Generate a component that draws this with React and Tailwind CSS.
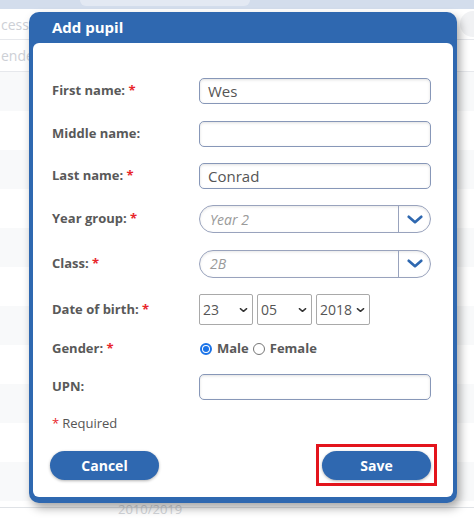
import React from "react";

const BLUE = "#2f68b0";

function Label({ text, required }) {
  return (
    <div className="w-[147px] shrink-0 text-[13px] font-bold text-[#595959]">
      {text}
      {required && <span className="text-[#e8262b]"> *</span>}
    </div>
  );
}

function Chevron({ className }) {
  return (
    <svg viewBox="0 0 20 12" className={className} fill="none">
      <path d="M3 3l7 6 7-6" stroke={BLUE} strokeWidth="3" strokeLinecap="round" strokeLinejoin="round" />
    </svg>
  );
}

function SmallChevron() {
  return (
    <svg viewBox="0 0 10 6" className="w-[9px] h-[6px] shrink-0" fill="none">
      <path d="M1.5 1.5l3.5 3 3.5-3" stroke="#333" strokeWidth="1.6" strokeLinecap="round" strokeLinejoin="round" />
    </svg>
  );
}

function TextBox({ value }) {
  return (
    <div className="w-[232px] h-[26px] flex items-center pl-[8px] rounded-[5px] border border-[#8797b8] bg-white shadow-[inset_0_1px_3px_rgba(0,0,0,0.12)] text-[15px] text-[#555]">
      {value}
    </div>
  );
}

function Picker({ value }) {
  return (
    <div className="w-[232px] h-[28px] flex rounded-full border border-[#99a3bd] bg-white shadow-[inset_0_1px_3px_rgba(0,0,0,0.1)] overflow-hidden">
      <div className="flex-1 flex items-center pl-[10px] text-[14px] italic text-[#9a9a9a]">{value}</div>
      <div className="w-[32px] border-l border-[#99a3bd] flex items-center justify-center">
        <Chevron className="w-[18px] h-[11px]" />
      </div>
    </div>
  );
}

function DateBox({ value, w }) {
  return (
    <div className={`${w} h-[31px] flex items-center justify-between pl-[3px] pr-[4px] border border-[#a9a9a9] rounded-[2px] bg-white text-[14px] text-[#555]`}>
      <span>{value}</span>
      <SmallChevron />
    </div>
  );
}

function Radio({ checked }) {
  return checked ? (
    <span className="inline-flex w-[12px] h-[12px] rounded-full border-2 border-[#1a73e8] items-center justify-center">
      <span className="block w-[6px] h-[6px] rounded-full bg-[#1a73e8]" />
    </span>
  ) : (
    <span className="inline-block w-[12px] h-[12px] rounded-full border border-[#767676] bg-white" />
  );
}

export default function App() {
  const stripes = [0, 1, 2, 3, 4, 5, 6, 7, 8, 9, 10];

  return (
    <div className="relative w-[474px] h-[518px] overflow-hidden bg-white font-['Open_Sans',sans-serif]">
      {/* page behind the modal */}
      <div className="h-[9px] bg-[#d3ddec] flex px-[80px]">
        <div className="w-[170px] h-[6px] rounded-b-full bg-[#e3e9f3]" />
      </div>
      <div className="h-[31px] flex items-center justify-between border-b border-[#e6e8ec] text-[14px] text-[#cdd0d6]">
        <span className="pl-[1px]">cess</span>
        <span className="w-[26px] h-[26px] rounded-full bg-[#f1f2f4] mr-[-12px]" />
      </div>
      <div className="h-[32px] flex items-center border-b border-[#e6e8ec] text-[14px] text-[#cdd0d6]">
        <span className="pl-[1px]">ende</span>
      </div>
      {stripes.map((i) => (
        <div key={i} className={`h-[39px] ${i % 2 === 0 ? "bg-[#f8f9fa]" : "bg-white"}`} />
      ))}
      <div className="absolute left-0 right-0 top-[507px] border-t border-[#dfe2e6]" />
      <div className="absolute left-[118px] top-[500px] text-[13px] text-[#d3d6da]">2010/2019</div>

      {/* modal */}
      <div className="absolute left-[29px] top-[12px] w-[428px] h-[491px] flex flex-col rounded-[10px] bg-[#2f68b0] shadow-[3px_5px_10px_rgba(0,0,0,0.35)]">
        <div className="h-[31px] shrink-0 flex items-center pl-[23px] text-[15px] font-bold text-white">
          Add pupil
        </div>
        <div className="flex-1 mx-[4px] mb-[6px] rounded-[6px] bg-white pl-[19px] pt-[35px]">
          <div className="flex items-center h-[26px]">
            <Label text="First name:" required />
            <TextBox value="Wes" />
          </div>
          <div className="flex items-center h-[26px] mt-[17px]">
            <Label text="Middle name:" />
            <TextBox value="" />
          </div>
          <div className="flex items-center h-[26px] mt-[16px]">
            <Label text="Last name:" required />
            <TextBox value="Conrad" />
          </div>
          <div className="flex items-center h-[28px] mt-[16px]">
            <Label text="Year group:" required />
            <Picker value="Year 2" />
          </div>
          <div className="flex items-center h-[29px] mt-[16px]">
            <Label text="Class:" required />
            <Picker value="2B" />
          </div>
          <div className="flex items-center h-[31px] mt-[16px]">
            <Label text="Date of birth:" required />
            <div className="flex gap-[4px]">
              <DateBox value="23" w="w-[54px]" />
              <DateBox value="05" w="w-[55px]" />
              <DateBox value="2018" w="w-[54px]" />
            </div>
          </div>
          <div className="flex items-center h-[20px] mt-[14px]">
            <Label text="Gender:" required />
            <div className="flex items-center pl-[1px] text-[13px] font-bold text-[#595959]">
              <Radio checked />
              <span className="ml-[5px]">Male</span>
              <span className="ml-[4px] flex items-center"><Radio /></span>
              <span className="ml-[5px]">Female</span>
            </div>
          </div>
          <div className="flex items-center h-[27px] mt-[14px]">
            <Label text="UPN:" />
            <TextBox value="" />
          </div>
          <div className="h-[18px] mt-[15px] flex items-center text-[13px] text-[#555]">
            <span className="text-[#e8262b]">*</span>
            <span className="ml-[3px]">Required</span>
          </div>
          <div className="flex items-center justify-between mt-[11px] -ml-[2px] pr-[16px]">
            <button className="w-[109px] h-[29px] rounded-full bg-[#2f68b0] text-white text-[14px] font-bold shadow-[0_1px_3px_rgba(0,0,0,0.3)]">
              Cancel
            </button>
            <div className="border-[3px] border-[#e3141c] px-[3px] pt-[4px] pb-[3px]">
              <button className="w-[109px] h-[29px] rounded-full bg-[#2f68b0] text-white text-[14px] font-bold shadow-[0_1px_3px_rgba(0,0,0,0.3)]">
                Save
              </button>
            </div>
          </div>
        </div>
      </div>
    </div>
  );
}
